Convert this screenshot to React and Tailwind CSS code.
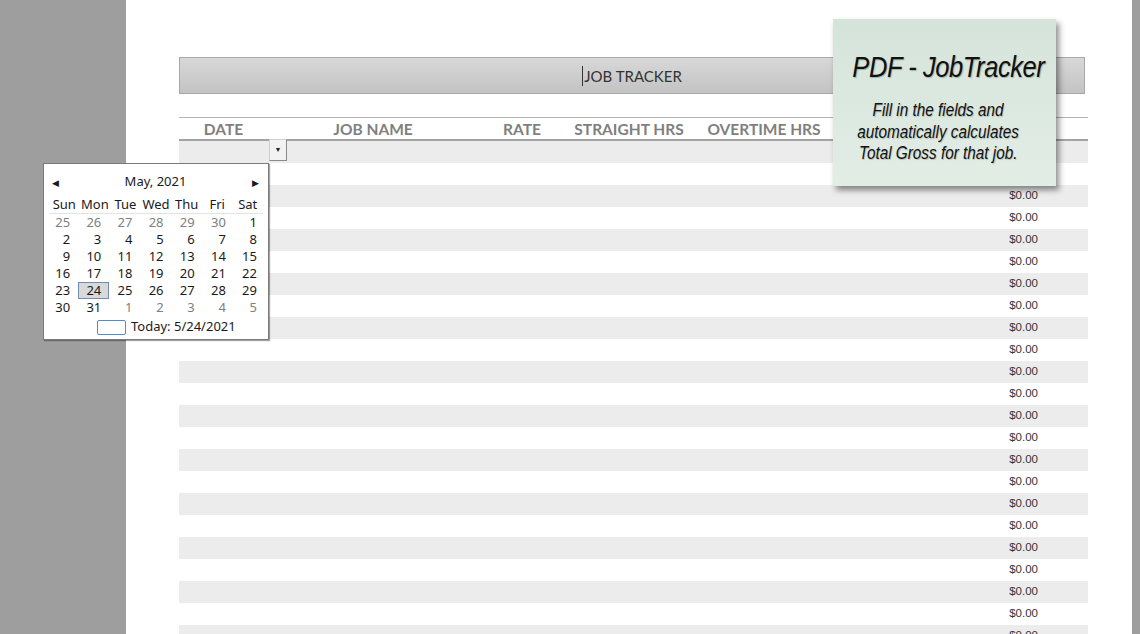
import React from "react";

const headFont = { fontFamily: '"Lato", "Liberation Sans", sans-serif' };

const columns = [
  { label: "DATE", w: "w-[89px]" },
  { label: "JOB NAME", w: "w-[210px]" },
  { label: "RATE", w: "w-[88px]" },
  { label: "STRAIGHT HRS", w: "w-[126px]" },
  { label: "OVERTIME HRS", w: "w-[144px]" },
];

const weeks = [
  [[25, 1], [26, 1], [27, 1], [28, 1], [29, 1], [30, 1], [1, 0]],
  [[2, 0], [3, 0], [4, 0], [5, 0], [6, 0], [7, 0], [8, 0]],
  [[9, 0], [10, 0], [11, 0], [12, 0], [13, 0], [14, 0], [15, 0]],
  [[16, 0], [17, 0], [18, 0], [19, 0], [20, 0], [21, 0], [22, 0]],
  [[23, 0], [24, 0], [25, 0], [26, 0], [27, 0], [28, 0], [29, 0]],
  [[30, 0], [31, 0], [1, 1], [2, 1], [3, 1], [4, 1], [5, 1]],
];

const days = ["Sun", "Mon", "Tue", "Wed", "Thu", "Fri", "Sat"];

function DatePicker() {
  return (
    <div className="absolute left-[43px] top-[163px] w-[226px] h-[177px] bg-white border border-[#7a7a7a] shadow-[1px_1px_1px_rgba(0,0,0,0.35)] px-[3px] pt-[8px] text-[13px] text-[#1a1a1a] font-['Noto_Sans',sans-serif]">
      <div className="flex h-[20px] items-center justify-between pl-[5px] pr-[6px]">
        <span className="text-[9px] leading-none">◀</span>
        <span>May, 2021</span>
        <span className="text-[9px] leading-none">▶</span>
      </div>
      <div className="grid grid-cols-7 h-[22px] pt-[3px] items-center border-b border-[#e3e3e3] mx-[2px]">
        {days.map((d) => (
          <div key={d} className="text-center">{d}</div>
        ))}
      </div>
      {weeks.map((week, i) => (
        <div key={i} className="grid grid-cols-7 h-[17px] leading-[17px]">
          {week.map(([n, other], j) =>
            i === 4 && j === 1 ? (
              <div key={j} className="text-right pr-[7px] bg-[#d9d9d9] border border-[#6f8db3] leading-[15px]">
                {n}
              </div>
            ) : (
              <div key={j} className={"text-right pr-[8px] " + (other ? "text-[#808080]" : "")}>
                {n}
              </div>
            )
          )}
        </div>
      ))}
      <div className="flex items-center h-[20px] mt-[1px] pl-[50px] gap-[5px]">
        <div className="w-[29px] h-[15px] border border-[#4a8fd6] rounded-[2px]" />
        <span>Today: 5/24/2021</span>
      </div>
    </div>
  );
}

function Note() {
  return (
    <div className="absolute left-[833px] top-[19px] w-[223px] h-[167px] flex flex-col items-center bg-gradient-to-b from-[#d5e4da] to-[#e2ede6] shadow-[3px_4px_6px_rgba(0,0,0,0.45)] text-[#111] italic font-['Liberation_Sans',sans-serif]">
      <span className="mt-[30px] pl-[8px] inline-block whitespace-nowrap scale-x-[0.85] text-[30px] leading-[36px] tracking-[-0.5px] [text-shadow:1px_1px_1px_rgba(0,0,0,0.25)]">
        PDF - JobTracker
      </span>
      <div className="mt-[15px] pr-[13px] flex flex-col items-center text-[18px] leading-[21.5px] [text-shadow:1px_1px_1px_rgba(0,0,0,0.2)]">
        <span className="inline-block whitespace-nowrap scale-x-[0.85]">Fill in the fields and</span>
        <span className="inline-block whitespace-nowrap scale-x-[0.85]">automatically calculates</span>
        <span className="inline-block whitespace-nowrap scale-x-[0.85]">Total Gross for that job.</span>
      </div>
    </div>
  );
}

export default function App() {
  const rows = Array.from({ length: 23 }, (_, i) => i);

  return (
    <div className="relative flex w-[1140px] h-[634px] overflow-hidden bg-[#9e9e9e]">
      <div className="w-[126px] shrink-0" />
      <div className="relative w-[1006px] h-full bg-white pl-[53px] pt-[57px]">
        {/* title bar */}
        <div
          className="flex w-[906px] h-[37px] items-center justify-center border border-[#a8a8a8] bg-gradient-to-b from-[#d8d8d8] to-[#c3c3c3] text-[15px] text-[#333]"
          style={headFont}
        >
          <span className="border-l border-[#333] pl-[1px] leading-[20px]">JOB TRACKER</span>
        </div>

        {/* header */}
        <div
          className="mt-[23px] flex w-[909px] h-[24px] pt-[2px] items-center border-t border-[#b3b3b3] border-b-2 border-b-[#a3a3a3] text-[15.5px] font-bold text-[#7f7f7f]"
          style={headFont}
        >
          {columns.map((c) => (
            <div key={c.label} className={c.w + " text-center"}>
              {c.label}
            </div>
          ))}
        </div>

        {/* rows, the first two totals sit under the note */}
        <div className="w-[909px]">
          {rows.map((i) => (
            <div
              key={i}
              className={
                "flex h-[22px] items-center justify-end pr-[50px] text-[11.5px] text-[#333] font-['Liberation_Sans',sans-serif] " +
                (i % 2 === 0 ? "bg-[#ececec]" : "bg-white")
              }
            >
              {i > 1 ? "$0.00" : ""}
            </div>
          ))}
        </div>

        {/* dropdown button on selected date cell */}
        <div className="absolute left-[143px] top-[139px] w-[18px] h-[22px] flex items-center justify-center bg-[#f2f2f2] border border-[#d0d0d0] border-r-[#8a8a8a] border-b-[#8a8a8a] text-[7px] text-[#222]">
          ▼
        </div>
      </div>
      <div className="w-[8px] shrink-0" />

      <DatePicker />
      <Note />
    </div>
  );
}
